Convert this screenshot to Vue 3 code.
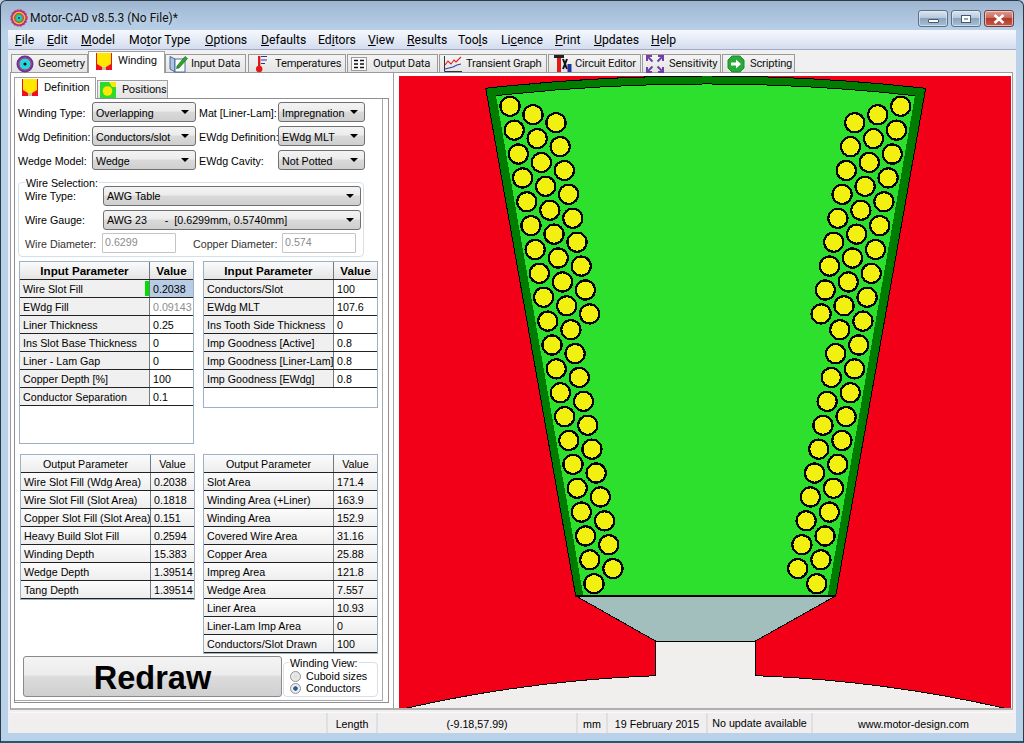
<script setup>
const menu = [
  ['', 'F', 'ile', 18], ['', 'E', 'dit', 20], ['', 'M', 'odel', 34], ['Mo', 't', 'or Type', 62], ['', 'O', 'ptions', 42],
  ['', 'D', 'efaults', 43], ['Ed', 'i', 'tors', 36], ['', 'V', 'iew', 25], ['', 'R', 'esults', 37], ['Too', 'l', 's', 29],
  ['Li', 'c', 'ence', 40], ['', 'P', 'rint', 25], ['', 'U', 'pdates', 43], ['', 'H', 'elp', 25]
]
const tabs = [
  { id: 'geo', label: 'Geometry', w: 77, m: 0, pad: 4, gap: 4 },
  { id: 'win', label: 'Winding', w: 77, m: 0, pad: 7, gap: 6, active: true },
  { id: 'inp', label: 'Input Data', w: 81, m: 0, pad: 3, gap: 2 },
  { id: 'tmp', label: 'Temperatures', w: 98, m: 2, pad: 4, gap: 4 },
  { id: 'out', label: 'Output Data', w: 91, m: 1, pad: 3, gap: 6 },
  { id: 'trn', label: 'Transient Graph', w: 108, m: 1, pad: 4, gap: 4 },
  { id: 'cir', label: 'Circuit Editor', w: 93, m: 1, pad: 5, gap: 3 },
  { id: 'sen', label: 'Sensitivity', w: 79, m: 1, pad: 3, gap: 5 },
  { id: 'scr', label: 'Scripting', w: 73, m: 1, pad: 4, gap: 5 }
]
const formRows = [
  ['Winding Type:', 'Overlapping', 'Mat [Liner-Lam]:', 'Impregnation'],
  ['Wdg Definition:', 'Conductors/slot', 'EWdg Definition:', 'EWdg MLT'],
  ['Wedge Model:', 'Wedge', 'EWdg Cavity:', 'Not Potted']
]
const gauge = 'AWG 23      -  [0.6299mm, 0.5740mm]'
const inputA = [
  ['Wire Slot Fill', '0.2038', 'picked'], ['EWdg Fill', '0.09143', 'dim'], ['Liner Thickness', '0.25'],
  ['Ins Slot Base Thickness', '0'], ['Liner - Lam Gap', '0'], ['Copper Depth [%]', '100'],
  ['Conductor Separation', '0.1']
]
const inputB = [
  ['Conductors/Slot', '100'], ['EWdg MLT', '107.6'], ['Ins Tooth Side Thickness', '0'],
  ['Imp Goodness [Active]', '0.8'], ['Imp Goodness [Liner-Lam]', '0.8'], ['Imp Goodness [EWdg]', '0.8']
]
const outputA = [
  ['Wire Slot Fill (Wdg Area)', '0.2038'], ['Wire Slot Fill (Slot Area)', '0.1818'],
  ['Copper Slot Fill (Slot Area)', '0.151'], ['Heavy Build Slot Fill', '0.2594'],
  ['Winding Depth', '15.383'], ['Wedge Depth', '1.39514'], ['Tang Depth', '1.39514']
]
const outputB = [
  ['Slot Area', '171.4'], ['Winding Area (+Liner)', '163.9'], ['Winding Area', '152.9'],
  ['Covered Wire Area', '31.16'], ['Copper Area', '25.88'], ['Impreg Area', '121.8'],
  ['Wedge Area', '7.557'], ['Liner Area', '10.93'], ['Liner-Lam Imp Area', '0'],
  ['Conductors/Slot Drawn', '100']
]
const tables = [
  { key: 'ia', head: 'Input Parameter', rows: inputA, kind: 'input', cls: 'ia' },
  { key: 'ib', head: 'Input Parameter', rows: inputB, kind: 'input', cls: 'ib' },
  { key: 'oa', head: 'Output Parameter', rows: outputA, kind: 'output', cls: 'oa' },
  { key: 'ob', head: 'Output Parameter', rows: outputB, kind: 'output', cls: 'ob' }
]
const status = [
  { t: 'Length', w: 50 }, { t: '(-9.18,57.99)', w: 200 }, { t: 'mm', w: 30 },
  { t: '19 February 2015', w: 100 }, { t: 'No update available', w: 105, up: true }, { t: 'www.motor-design.com', w: 203 }
]
const conductors = []
const col = (n, x0, y0, dx, dy) => {
  for (let i = 0; i < n; i++) {
    const x = x0 + dx * i, y = y0 + dy * i
    conductors.push({ x, y }, { x: 1410.7 - x, y })
  }
}
col(21, 510, 106.3, 4.2, 23.87)
col(20, 533, 114.7, 4.21, 23.89)
col(9, 556, 122.7, 4.2, 23.9)
</script>

<template>
  <div class="window">
    <header class="titlebar">
      <svg class="appicon" width="18" height="18" viewBox="0 0 18 18">
        <circle cx="9" cy="9" r="8" fill="#8a2bc8" stroke="#e03040" stroke-width="1.4" stroke-dasharray="2 1.2"/>
        <circle cx="9" cy="9" r="6.4" fill="#f0c020"/>
        <circle cx="9" cy="9" r="5" fill="#e83050"/>
        <circle cx="9" cy="9" r="3.9" fill="#30c040"/>
        <circle cx="9" cy="9" r="2.7" fill="#20c8d8"/>
        <circle cx="9" cy="9" r="1.1" fill="#203080"/>
      </svg>
      <span class="title">Motor-CAD v8.5.3 (No File)*</span>
      <div class="winbtns">
        <div class="wb"><span class="minglyph"></span></div>
        <div class="wb"><span class="maxglyph"></span></div>
        <div class="wb close">
          <svg width="12" height="10" viewBox="0 0 12 10"><path d="M1.5 1 L10.5 9 M10.5 1 L1.5 9" stroke="#fff" stroke-width="2.6"/></svg>
        </div>
      </div>
    </header>

    <div class="client">
      <nav class="menu">
        <span v-for="(m, i) in menu" :key="i" class="mi" :style="{ width: m[3] + 'px' }">{{ m[0] }}<u>{{ m[1] }}</u>{{ m[2] }}</span>
      </nav>

      <div class="tabstrip">
        <div v-for="t in tabs" :key="t.id" class="tab" :class="{ active: t.active }"
          :style="{ width: t.w + 'px', marginLeft: t.m + 'px', paddingLeft: t.pad + 'px', gap: t.gap + 'px' }">
          <svg v-if="t.id === 'geo'" width="18" height="18" viewBox="0 0 18 18">
            <circle cx="9" cy="9" r="7.5" fill="#1fd8e0" stroke="#6a2fa0" stroke-width="2"/>
            <circle cx="9" cy="9" r="6" fill="none" stroke="#e0203a" stroke-width="1"/>
            <circle cx="9" cy="9" r="1.6" fill="#111"/>
          </svg>
          <svg v-else-if="t.id === 'win'" width="16" height="17" viewBox="0 0 16 17" class="ic">
            <rect width="16" height="17" fill="#ee1020"/>
            <path d="M1 0H15V11L10 14H6L1 11Z" fill="#ffe800"/>
            <rect x="6" y="14" width="4" height="3" fill="#c8c0a0"/>
          </svg>
          <svg v-else-if="t.id === 'inp'" width="20" height="18" viewBox="0 0 20 18">
            <path d="M1 1.5 L6 4 V17 L1 14Z" fill="#a9c4e4" stroke="#3f5f88" stroke-width=".9"/>
            <path d="M6 4 H16 V17 H6Z" fill="#fff" stroke="#3f5f88" stroke-width=".9"/>
            <path d="M8 11 L16 1.5 L18.5 3.5 L10 13 L7.5 13.5Z" fill="#2aa62a" stroke="#155a15" stroke-width=".6"/>
          </svg>
          <svg v-else-if="t.id === 'tmp'" width="18" height="18" viewBox="0 0 18 18">
            <rect x="5" y="1" width="2.4" height="12" fill="#e01818"/>
            <circle cx="6.2" cy="14" r="3.2" fill="#e01818"/>
            <path d="M8 1.5H14M8 5H14M8 8.5H12" stroke="#3030a0" stroke-width="1.2"/>
          </svg>
          <svg v-else-if="t.id === 'out'" width="16" height="14" viewBox="0 0 16 14">
            <rect x=".5" y=".5" width="15" height="13" fill="#fafafa" stroke="#9a9a9a"/>
            <path d="M3 3.5H7M9 3.5H13M3 7H7M9 7H13M3 10.5H7M9 10.5H13" stroke="#111" stroke-width="1.6"/>
          </svg>
          <svg v-else-if="t.id === 'trn'" width="18" height="16" viewBox="0 0 18 16">
            <path d="M.5 0V15.5H18" fill="none" stroke="#333" stroke-width="1"/>
            <path d="M1 9 L4 5 L7 8 L10 4 L12 6 L17 1" fill="none" stroke="#e02020" stroke-width="1.1"/>
            <path d="M1 13 L5 12 L9 11 L13 9 L17 8" fill="none" stroke="#3040b0" stroke-width="1.1"/>
          </svg>
          <svg v-else-if="t.id === 'cir'" width="18" height="18" viewBox="0 0 18 18">
            <path d="M0 0H10V3H0Z" fill="#222"/>
            <rect x="3" y="3" width="4" height="14" fill="#e01818"/>
            <path d="M9 4 L13 14 M13 4 L9 14" stroke="#111" stroke-width="2"/>
            <rect x="13.5" y="9" width="4" height="8" fill="#2030a0"/>
          </svg>
          <svg v-else-if="t.id === 'sen'" width="18" height="18" viewBox="0 0 18 18">
            <g fill="none" stroke="#7040a8" stroke-width="2">
              <path d="M1 6V1H6M1 1 L6.5 6.5"/>
              <path d="M12 1H17V6M17 1 L11.5 6.5"/>
              <path d="M1 12V17H6M1 17 L6.5 11.5"/>
              <path d="M12 17H17V12M17 17 L11.5 11.5"/>
            </g>
          </svg>
          <svg v-else-if="t.id === 'scr'" width="18" height="18" viewBox="0 0 18 18">
            <path d="M5 1H13L17 5V13L13 17H5L1 13V5Z" fill="#2aa838" stroke="#1d8a2c" stroke-width="1"/>
            <path d="M4 7.5H9V4.5L14 9L9 13.5V10.5H4Z" fill="#fff"/>
          </svg>
          <span>{{ t.label }}</span>
        </div>
      </div>

      <main class="page">
        <section class="left">
          <div class="subtabs">
            <div class="subtab active">
              <svg width="16" height="17" viewBox="0 0 16 17" class="ic">
                <rect width="16" height="17" fill="#ee1020"/>
                <path d="M1 0H15V11L10 14H6L1 11Z" fill="#ffe800"/>
                <rect x="6" y="14" width="4" height="3" fill="#c8c0a0"/>
              </svg>
              <span>Definition</span>
            </div>
            <div class="subtab">
              <svg width="16" height="16" viewBox="0 0 16 16" class="ic">
                <rect width="16" height="16" fill="#2cdc2c"/>
                <path d="M9 0H16V5H12Z" fill="#ffe800"/>
                <circle cx="7.5" cy="9" r="4.8" fill="#ffe800"/>
              </svg>
              <span>Positions</span>
            </div>
          </div>

          <div class="subpage">
            <div class="inner">
              <div class="formgrid">
                <template v-for="r in formRows" :key="r[0]">
                  <label>{{ r[0] }}</label>
                  <div class="combo"><span>{{ r[1] }}</span><i></i></div>
                  <label class="l2">{{ r[2] }}</label>
                  <div class="combo"><span>{{ r[3] }}</span><i></i></div>
                </template>
              </div>

              <div class="group wire">
                <span class="legend">Wire Selection:</span>
                <div class="wrow">
                  <label>Wire Type:</label>
                  <div class="combo wide"><span>AWG Table</span><i></i></div>
                </div>
                <div class="wrow">
                  <label>Wire Gauge:</label>
                  <div class="combo wide"><span class="pre">{{ gauge }}</span><i></i></div>
                </div>
                <div class="drow">
                  <label class="dl1">Wire Diameter:</label>
                  <div class="edit">0.6299</div>
                  <label class="dl2">Copper Diameter:</label>
                  <div class="edit">0.574</div>
                </div>
              </div>

              <div class="tablegrid">
                <div v-for="tb in tables" :key="tb.key" class="ptable" :class="[tb.kind, tb.cls]">
                  <div class="row head">
                    <div class="c1">{{ tb.head }}</div>
                    <div class="c2">Value</div>
                  </div>
                  <div v-for="r in tb.rows" :key="r[0]" class="row">
                    <div class="c1">{{ r[0] }}<b v-if="r[2] === 'picked'" class="flag"></b></div>
                    <div class="c2" :class="r[2]">{{ r[1] }}</div>
                  </div>
                </div>
              </div>

              <div class="actions">
                <button class="redraw" type="button">Redraw</button>
                <div class="group view">
                  <span class="legend">Winding View:</span>
                  <div class="radio"><b></b><span>Cuboid sizes</span></div>
                  <div class="radio on"><b></b><span>Conductors</span></div>
                </div>
              </div>
            </div>
          </div>
        </section>

        <section class="canvas">
          <svg class="drawing" width="612" height="632" viewBox="399 76 612 632" shape-rendering="crispEdges">
            <rect x="399" y="76" width="612" height="632" fill="#f20017"/>
            <path d="M655.5 641H755.5V675.7A1343 1343 0 0 1 1012.5 710H398.5A1343 1343 0 0 1 655.5 675.7Z" fill="#f0efee" stroke="#000" stroke-width="1"/>
            <path d="M576 596H835.5L755.5 641H655.5Z" fill="#a2bfbd" stroke="#000" stroke-width="1"/>
            <path d="M485.7 88.3A1973 1973 0 0 1 925.7 88.3L835.7 596H575.7Z" fill="#007c00" stroke="#000" stroke-width="1"/>
            <path d="M496 95.7A1881 1881 0 0 1 915 95.7L827.7 595.5H583.3Z" fill="#2de02d"/>
            <path d="M496 95.7A1881 1881 0 0 1 915 95.7" fill="none" stroke="#000" stroke-width="1"/>
            <path d="M575.7 595.5H835.7" fill="none" stroke="#000" stroke-width="1"/>
            <circle v-for="(c, i) in conductors" :key="i" :cx="c.x" :cy="c.y" r="9.6" fill="#f2f010" stroke="#000" stroke-width="2.2"/>
          </svg>
        </section>
      </main>

      <footer class="statusbar">
        <div class="spacer"></div>
        <div v-for="s in status" :key="s.t" class="cell" :class="{ up: s.up }" :style="{ width: s.w + 'px' }">{{ s.t }}</div>
      </footer>
    </div>
  </div>
</template>

<style>
html, body { margin: 0; background: #b9d1e9; }
</style>

<style scoped>
.window {
  width: 1024px; height: 743px; box-sizing: border-box; display: flex; flex-direction: column;
  overflow: hidden; border: 1px solid #2c3a44; border-bottom: 2px solid #1e5a70;
  border-radius: 6px 6px 0 0;
  background: linear-gradient(#9db5d0 0, #b8d0e8 30px, #b9d1e9 100%);
  font: 10.7px "Liberation Sans", Arial, sans-serif; color: #000;
}
.titlebar { height: 29px; flex: none; display: flex; align-items: flex-start; padding: 8px 9px 0 9px; box-sizing: border-box; }
.appicon { margin-right: 2px; flex: none; }
.title { font: 12px/18px Roboto, "Liberation Sans", sans-serif; color: #111; text-shadow: 0 0 6px #dbe8f5; }
.winbtns { margin-left: auto; display: flex; gap: 3px; margin-top: 1px; }
.wb {
  width: 30px; height: 17px; box-sizing: border-box; border: 1px solid #5c6f84; border-radius: 3px;
  background: linear-gradient(#dbe6f1 0, #b6c9dd 45%, #8aa4bf 50%, #a9c0d6 100%);
  display: flex; align-items: center; justify-content: center; box-shadow: inset 0 0 0 1px #e2ebf4aa;
}
.wb.close { background: linear-gradient(#dc9d93 0, #c96a5c 45%, #b13a2c 50%, #c65a48 100%); border-color: #7c3a34; }
.minglyph { width: 9px; height: 2px; border: 1px solid #46586c; background: #fff; margin-top: 5px; border-radius: 1px; }
.maxglyph { width: 4px; height: 2px; border: 2px solid #fff; outline: 1px solid #46586c; }
.client { flex: 1; margin: 0 7px 8px 7px; display: flex; flex-direction: column; background: #f0f0f0; min-height: 0; }
.menu {
  height: 20px; box-sizing: border-box; flex: none; display: flex; gap: 14px; align-items: center; padding: 1px 0 0 7px;
  background: linear-gradient(#f6f8fc, #e9eef8 40%, #d3dcef); border-bottom: 1px solid #a6aac4;
  font: 12.2px Roboto, "Liberation Sans", sans-serif;
}
.mi { white-space: nowrap; flex: none; }
.mi u { text-decoration: underline; text-underline-offset: 1px; }
.tabstrip { height: 22px; flex: none; display: flex; align-items: flex-end; padding-left: 3px; position: relative; z-index: 2; }
.tab {
  height: 18px; box-sizing: border-box; display: flex; align-items: center;
  border: 1px solid #9a9a9a; border-bottom: 0; white-space: nowrap;
  background: linear-gradient(#f4f4f4, #e4e4e4); color: #111; font: 11.2px Roboto, "Liberation Sans", sans-serif; letter-spacing: -.22px;
}
.tab svg { flex: none; }
.tab.active { height: 22px; background: #fff; margin-bottom: -1px; z-index: 3; align-items: flex-start; padding-top: 1px; border-color: #a0a0a0; }
.tab.active span { margin-top: 1px; }
.page {
  flex: 1; min-height: 0; display: flex; margin: 0 3px 0 2px; box-sizing: border-box;
  border: 1px solid #9a9aa0; border-bottom: 2px solid #b0b0b0; background: #fff;
}
.left { width: 383px; flex: none; border-right: 1px solid #a0a0a0; display: flex; flex-direction: column; padding: 4px 0 5px 3px; box-sizing: border-box; background: #fff; }
.subtabs { height: 21px; flex: none; display: flex; align-items: flex-end; position: relative; z-index: 2; }
.subtab {
  height: 18px; box-sizing: border-box; width: 71px; display: flex; align-items: center; gap: 6px; padding-left: 2px; margin-left: 1px;
  border: 1px solid #a0a0a0; border-bottom: 0; background: linear-gradient(#f3f3f3, #e4e4e4); color: #111; font: 11.2px Roboto, "Liberation Sans", sans-serif; letter-spacing: -.22px;
}
.subtab.active { width: 82px; height: 22px; background: #fff; padding-left: 7px; margin-left: 0; margin-bottom: -1px; align-items: flex-start; }
.subtab.active .ic { margin-top: 1px; }
.subtab.active span { margin-top: 3px; }
.subpage { flex: 1; min-height: 0; border: 1px solid #8e8e94; display: flex; background: #fff; width: 375px; box-sizing: border-box; }
.inner { flex: 1; border-right: 1px solid #a8a8a8; border-bottom: 1px solid #a8a8a8; margin: 0 5px 1px 0; padding: 3px 0 0 3px; min-width: 0; }
.formgrid { display: grid; grid-template-columns: 74px 104px 82px 87px; grid-auto-rows: 20px; row-gap: 4px; align-items: center; }
.formgrid label { white-space: nowrap; padding-top: 1px; }
.formgrid .l2 { padding-left: 3px; }
.combo {
  height: 100%; box-sizing: border-box; display: flex; align-items: center; justify-content: space-between;
  padding: 0 6px 0 3px; border: 1px solid #707070; border-radius: 3px;
  background: linear-gradient(#f3f3f3, #ececec 45%, #d9d9d9 50%, #cfcfcf); white-space: nowrap;
}
.formgrid .combo span { padding-top: 1px; }
.combo i { width: 0; height: 0; border: 4px solid transparent; border-top: 4px solid #000; border-bottom: 0; flex: none; }
.pre { white-space: pre; }
.group { position: relative; border: 1px solid #d6e0e8; border-radius: 4px; box-sizing: border-box; }
.legend { position: absolute; top: -7px; left: 6px; background: #fff; padding: 0 1px; line-height: 14px; white-space: nowrap; }
.wire { width: 346px; height: 75px; margin-top: 12px; padding: 3px 2px 0 6px; }
.wrow { display: flex; align-items: center; height: 20px; margin-bottom: 4px; }
.wrow label { width: 78px; flex: none; }
.combo.wide { width: 258px; flex: none; padding: 0 6px 0 3px; }
.drow { display: flex; align-items: center; height: 20px; margin-top: -1px; }
.drow label { padding-top: 1px; }
.dl1 { width: 77px; flex: none; color: #333; }
.dl2 { width: 89px; flex: none; margin-left: 17px; color: #333; }
.edit { width: 74px; height: 20px; box-sizing: border-box; border: 1px solid #c4c4c4; color: #8c8c8c; padding: 1px 2px; line-height: 14px; border-radius: 1px; }
.tablegrid { display: grid; grid-template-columns: 175px 175px; grid-template-rows: 183px 203px; column-gap: 9px; row-gap: 10px; margin: 4px 0 0 1px; align-items: start; }
.ptable { border: 1px solid #9db1c4; box-sizing: border-box; background: #fff; width: 175px; }
.ptable.ia { height: 183px; }
.ptable.ib { height: 147px; }
.ptable.oa { margin-left: 1px; }
.row { display: grid; height: 18px; box-sizing: border-box; border-bottom: 1px solid #222; grid-template-columns: 130px 1fr; }
.c1, .c2 { line-height: 18px; white-space: nowrap; overflow: hidden; padding-left: 3px; position: relative; }
.output .c1, .output .c2 { line-height: 19px; }
.c1 { border-right: 1px solid #6f7a84; background: #f0f0f0; }
.c2 { background: #fff; }
.head .c1, .head .c2 { text-align: center; padding: 0; background: linear-gradient(#fbfbfb, #e4e4e4); }
.input .head .c1, .input .head .c2 { font-weight: bold; font-size: 11.6px; }
.output .row .c1, .output .row .c2 { background: linear-gradient(#fcfcfc, #ededed); }
.c2.picked { background: #b8cce6; }
.c2.dim { color: #8e8e8e; }
.flag { position: absolute; right: 0; top: 1px; width: 4px; height: 15px; background: #00e000; }
.actions { display: flex; margin-top: -1px; }
.redraw {
  width: 259px; height: 41px; margin: 0 0 0 5px; box-sizing: border-box; border: 1px solid #8a8a8a; border-radius: 3px;
  background: linear-gradient(#f4f4f4, #ececec 45%, #dcdcdc 50%, #cfcfcf);
  font: bold 32.5px "Liberation Sans", Arial, sans-serif; color: #000; padding: 3px 0 0;
}
.view { width: 95px; height: 35px; margin: 6px 0 0 1px; padding: 7px 0 0 6px; }
.view .legend { left: 5px; }
.radio { display: flex; align-items: center; gap: 5px; height: 12px; }
.radio b { width: 11px; height: 11px; box-sizing: border-box; border-radius: 50%; border: 1px solid #8e8f8f; background: radial-gradient(#dcdcdc, #f4f4f4); flex: none; }
.radio.on b { background: radial-gradient(#2a5a90 0, #2a5a90 30%, #e8eef4 40%); }
.canvas { flex: 1; min-width: 0; display: flex; padding: 3px 1px 0 5px; background: #fff; }
.drawing { display: block; }
.statusbar { height: 21px; flex: none; display: flex; margin: 2px 2px 0 2px; background: #f0eeee; border-top: 1px solid #f8f8f8; box-sizing: border-box; }
.spacer { width: 316px; }
.cell { box-sizing: border-box; border-left: 2px solid #dfdfdf; text-align: center; line-height: 23px; white-space: nowrap; }
.cell.up { line-height: 20px; }
</style>
